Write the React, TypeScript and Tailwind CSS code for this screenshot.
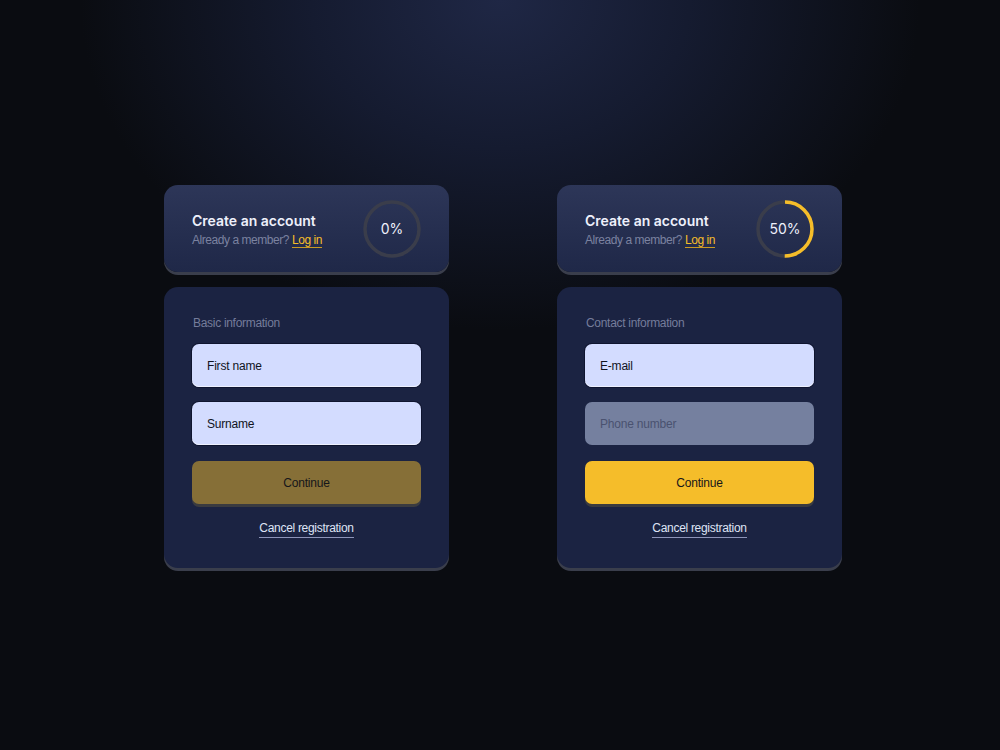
const ACCENT = "#f5bd2a";

function Progress({ value }: { value: number }) {
  const r = 27;
  const c = 2 * Math.PI * r;
  return (
    <div className="relative h-[60px] w-[60px] shrink-0">
      <svg width="60" height="60" viewBox="0 0 60 60" className="-rotate-90">
        <circle cx="30" cy="30" r={r} fill="none" stroke="#3a3d4b" strokeWidth="3.5" />
        {value > 0 && (
          <circle
            cx="30"
            cy="30"
            r={r}
            fill="none"
            stroke={ACCENT}
            strokeWidth="3.5"
            strokeDasharray={`${(c * value) / 100} ${c}`}
          />
        )}
      </svg>
      <span className="absolute inset-0 flex items-center justify-center text-[14px] text-[#eef0fb] font-['Inter',sans-serif]">
        {value}%
      </span>
    </div>
  );
}

function Field({ label, muted }: { label: string; muted?: boolean }) {
  return (
    <div
      className={`flex h-[43px] items-center rounded-[7px] px-[15px] text-[12px] tracking-[-0.2px] ${
        muted
          ? "bg-[#75809f] text-[#4a5270]"
          : "bg-[#d3dcff] text-[#10131d] shadow-[inset_0_-1px_0_#eef1ff,0_0_0_1px_#0f1530]"
      }`}
    >
      {label}
    </div>
  );
}

function SignupCard({
  progress,
  section,
  fields,
  active,
}: {
  progress: number;
  section: string;
  fields: { label: string; muted?: boolean }[];
  active: boolean;
}) {
  return (
    <div className="w-[285px]">
      <div className="flex h-[87px] items-center justify-between rounded-[14px] bg-gradient-to-b from-[#2d3658] to-[#1f2848] pl-[28px] pr-[27px] shadow-[0_3px_0_#3a3e4c]">
        <div className="pt-[3px]">
          <h2 className="text-[14px] font-semibold leading-5 text-[#eef0fb] font-['Inter',sans-serif]">
            Create an account
          </h2>
          <p className="text-[12px] tracking-[-0.45px] text-[#7b82a0]">
            Already a member?{" "}
            <span className="border-b border-[#c99a22] text-[#f5bd2a]">Log in</span>
          </p>
        </div>
        <Progress value={progress} />
      </div>

      <div className="mt-[15px] flex flex-col rounded-[14px] bg-[#1b2342] px-[28px] pb-[30px] pt-[29px] shadow-[0_3px_0_#3a3e4c]">
        <p className="pl-[1px] text-[12px] leading-[14px] tracking-[-0.3px] text-[#757c9b]">{section}</p>
        <div className="mt-[14px] flex flex-col gap-[15px]">
          {fields.map((f) => (
            <Field key={f.label} label={f.label} muted={f.muted} />
          ))}
        </div>
        <button
          className={`mt-[16px] h-[43px] rounded-[7px] text-[12px] tracking-[-0.2px] text-[#15161a] shadow-[0_3px_0_#3a3b40] ${
            active ? "bg-[#f5bd2a]" : "bg-[#866f37]"
          }`}
        >
          Continue
        </button>
        <div className="mt-[17px] flex justify-center">
          <span className="border-b border-[#8d94b8] pb-[1px] text-[12px] leading-[15px] tracking-[-0.3px] text-[#dfe3f5]">
            Cancel registration
          </span>
        </div>
      </div>
    </div>
  );
}

export default function App() {
  return (
    <div className="min-h-[750px] w-full bg-[#0a0c11] bg-[radial-gradient(ellipse_420px_330px_at_50%_0%,#1f2745_0%,#151b30_45%,#0a0c11_100%)] font-['Liberation_Sans',Arial,sans-serif]">
      <div className="flex justify-center gap-[108px] pl-[6px] pt-[185px]">
        <SignupCard
          progress={0}
          section="Basic information"
          fields={[{ label: "First name" }, { label: "Surname" }]}
          active={false}
        />
        <SignupCard
          progress={50}
          section="Contact information"
          fields={[{ label: "E-mail" }, { label: "Phone number", muted: true }]}
          active
        />
      </div>
    </div>
  );
}
